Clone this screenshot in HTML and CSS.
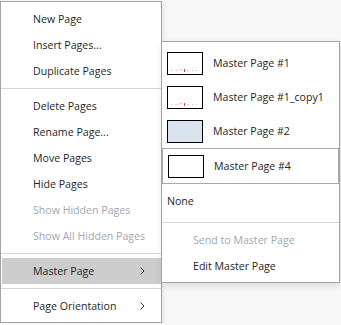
FILE: index.html
```html
<!DOCTYPE html>
<html>
<head>
<meta charset="utf-8">
<link rel="stylesheet" href="styles.css">
</head>
<body>
<div class="stage">
  <div class="menu main">
    <div class="item">New Page</div>
    <div class="item">Insert Pages...</div>
    <div class="item">Duplicate Pages</div>
    <div class="sep"></div>
    <div class="item">Delete Pages</div>
    <div class="item">Rename Page...</div>
    <div class="item">Move Pages</div>
    <div class="item">Hide Pages</div>
    <div class="item disabled">Show Hidden Pages</div>
    <div class="item disabled">Show All Hidden Pages</div>
    <div class="sep"></div>
    <div class="item active"><span>Master Page</span><svg class="chev" width="5" height="8" viewBox="0 0 5 8"><polyline points="0.5,0.5 4,4 0.5,7.5" fill="none" stroke="#333" stroke-width="1"/></svg></div>
    <div class="sep"></div>
    <div class="item"><span>Page Orientation</span><svg class="chev" width="5" height="8" viewBox="0 0 5 8"><polyline points="0.5,0.5 4,4 0.5,7.5" fill="none" stroke="#333" stroke-width="1"/></svg></div>
  </div>
  <div class="menu sub">
    <div class="mp">
      <svg class="thumb" width="36" height="23" viewBox="0 0 36 23"><rect x="0.5" y="0.5" width="35" height="22" fill="#fff" stroke="#000"/><rect x="4" y="18" width="2" height="1" fill="#f0c8cf"/><rect x="8" y="18" width="3" height="1" fill="#f3d0d6"/><rect x="13" y="17" width="2" height="1" fill="#eab8c0"/><rect x="17" y="17" width="1" height="3" fill="#d9404f"/><rect x="20" y="18" width="2" height="1" fill="#f0c0c8"/><rect x="25" y="18" width="1" height="1" fill="#e9b0ba"/><rect x="29" y="18" width="1" height="1" fill="#f0c8cf"/></svg>
      <span>Master Page #1</span>
    </div>
    <div class="mp">
      <svg class="thumb" width="36" height="23" viewBox="0 0 36 23"><rect x="0.5" y="0.5" width="35" height="22" fill="#fff" stroke="#000"/><rect x="4" y="18" width="2" height="1" fill="#f0c8cf"/><rect x="8" y="18" width="3" height="1" fill="#f3d0d6"/><rect x="13" y="17" width="2" height="1" fill="#eab8c0"/><rect x="17" y="17" width="1" height="3" fill="#d9404f"/><rect x="20" y="18" width="2" height="1" fill="#f0c0c8"/><rect x="25" y="18" width="1" height="1" fill="#e9b0ba"/><rect x="29" y="18" width="1" height="1" fill="#f0c8cf"/></svg>
      <span>Master Page #1_copy1</span>
    </div>
    <div class="mp">
      <svg class="thumb" width="36" height="23" viewBox="0 0 36 23"><rect x="0.5" y="0.5" width="35" height="22" fill="#dae4ef" stroke="#000"/></svg>
      <span>Master Page #2</span>
    </div>
    <div class="mp selected">
      <svg class="thumb" width="36" height="23" viewBox="0 0 36 23"><rect x="0.5" y="0.5" width="35" height="22" fill="#fff" stroke="#000"/></svg>
      <span>Master Page #4</span>
    </div>
    <div class="none">None</div>
    <div class="sep"></div>
    <div class="item disabled">Send to Master Page</div>
    <div class="item">Edit Master Page</div>
  </div>
</div>
</body>
</html>
```
FILE: styles.css
```css
html, body {
  margin: 0;
  padding: 0;
}
body {
  background: #f8f8f8;
  font-family: "Open Sans", "Liberation Sans", sans-serif;
  font-size: 10.6px;
  color: #262626;
}
.stage {
  display: flex;
  align-items: flex-start;
  padding-top: 1px;
}
.menu {
  background: #fff;
  border: 1px solid #a3a3a3;
  box-sizing: border-box;
}
.main {
  width: 162px;
  padding: 4px 0 3px;
  box-shadow: 2px 2px 5px rgba(0,0,0,0.08);
}
.sub {
  width: 179px;
  margin-top: 40px;
  margin-left: -1px;
  padding: 4px 0 3px;
  box-shadow: 2px 3px 8px rgba(0,0,0,0.12);
  position: relative;
}
.item {
  height: 26px;
  display: flex;
  align-items: center;
  padding-left: 31px;
  margin-left: 1px;
  position: relative;
}
.item.disabled {
  color: #a4a7ad;
}
.item.active {
  background: #cdcdcd;
}
.chev {
  position: absolute;
  left: 138px;
  top: 9px;
}
.sep {
  height: 1px;
  background: #d6d6d6;
  margin: 4px 0;
}
.mp {
  height: 34px;
  display: flex;
  align-items: center;
  padding-left: 5px;
}
.mp .thumb {
  display: block;
  margin-right: 10px;
}
.mp.selected {
  border: 1px solid #a9a9a9;
}
.none {
  height: 34px;
  display: flex;
  align-items: center;
  padding-left: 5px;
}
.sub .item {
  margin-left: 0;
}
```
